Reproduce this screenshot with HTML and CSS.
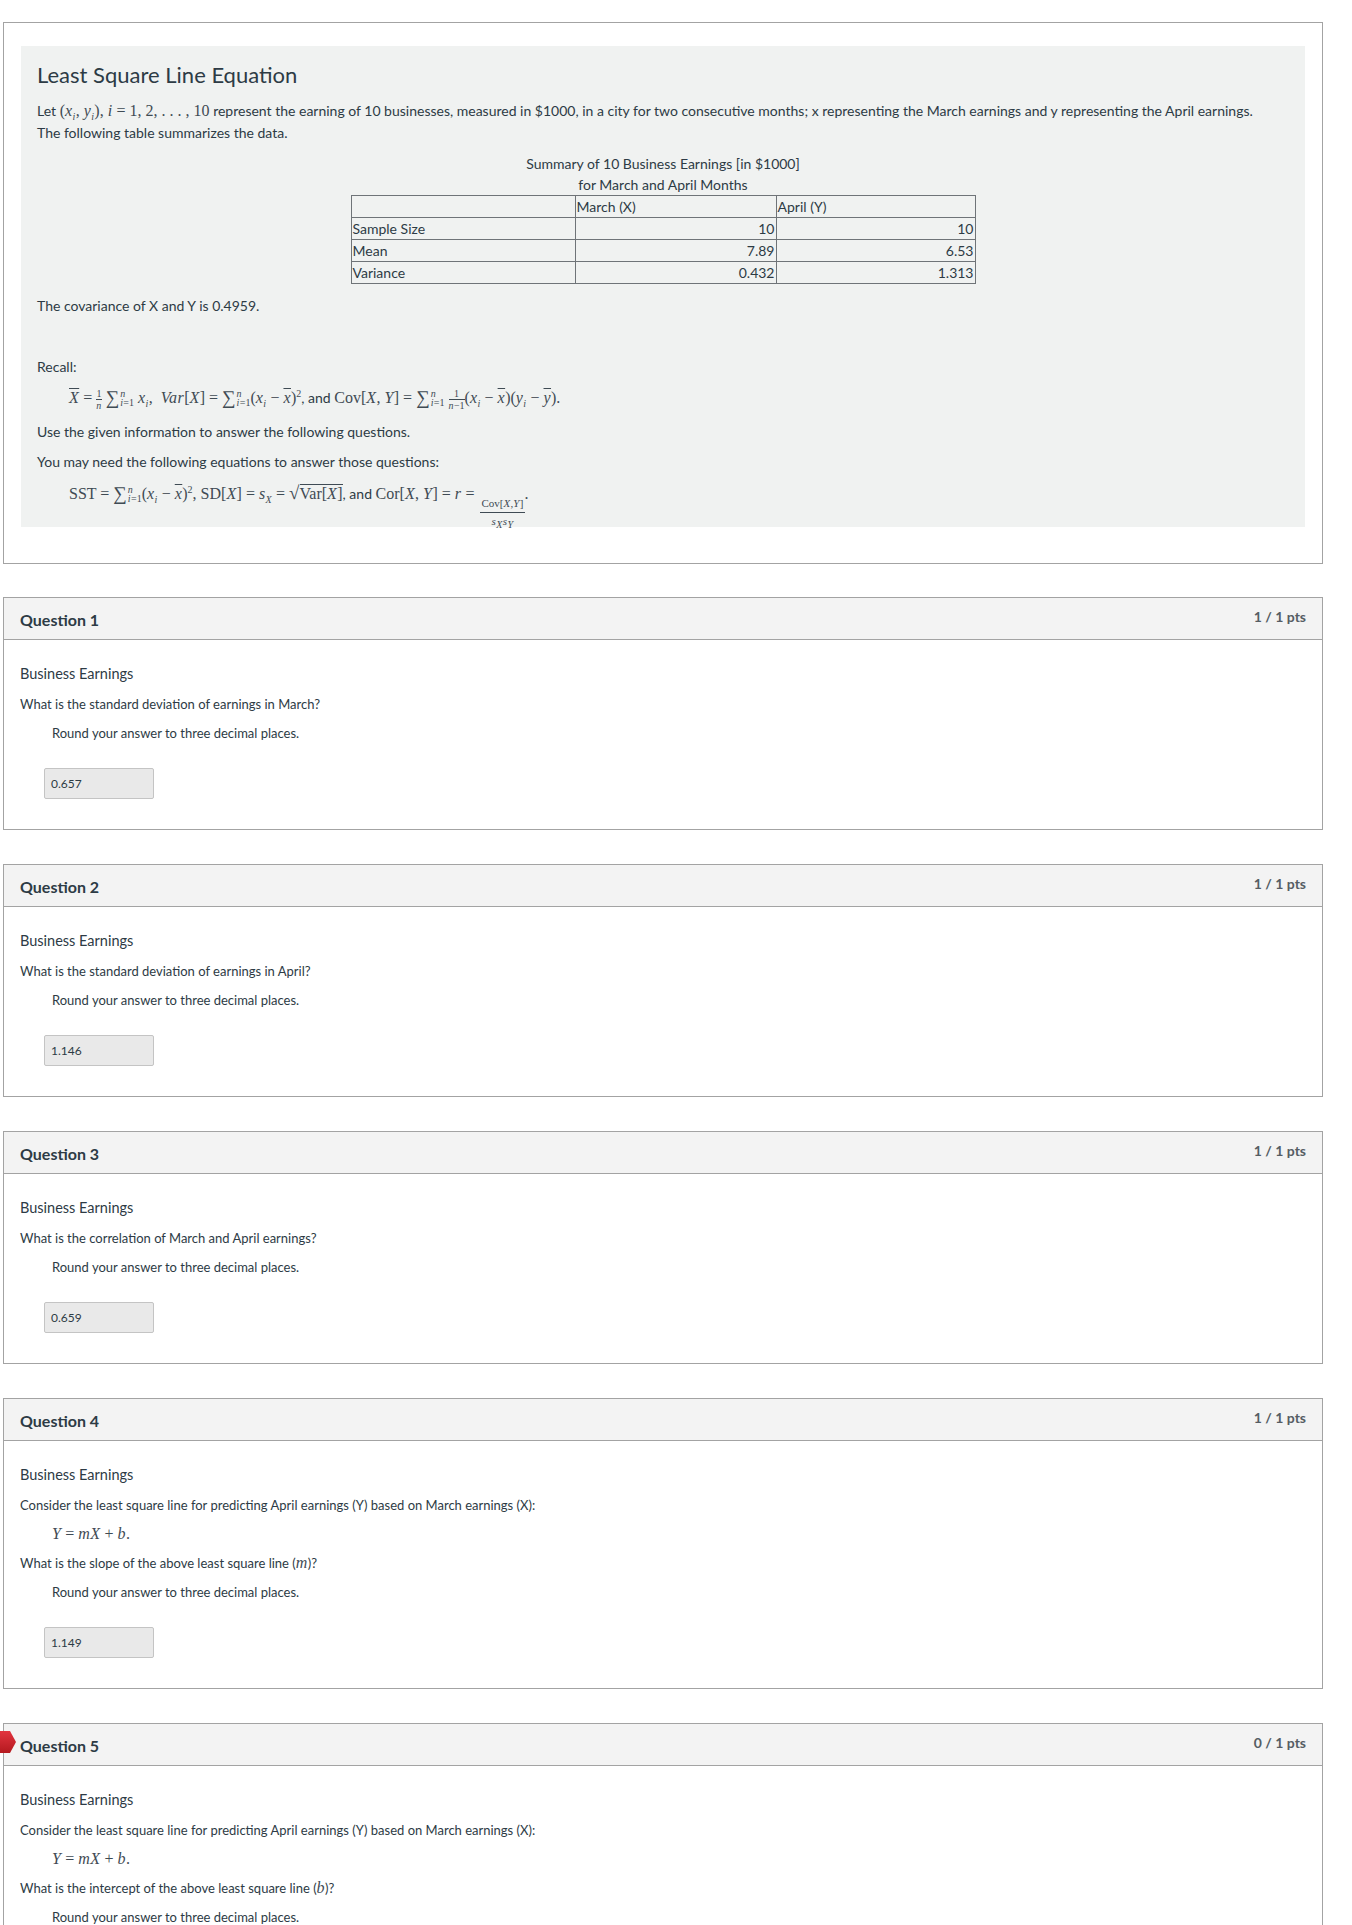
FILE: index.html
```html
<!DOCTYPE html>
<html lang="en">
<head>
    <meta charset="UTF-8">
    <title>Least Square Line Equation</title>
    <link rel="stylesheet" href="styles.css">
</head>
<body>
    <div class="quiz">
        <div class="card intro">
            <div class="panel">
                <h2>Least Square Line Equation</h2>
                <p class="lead">Let <span class="math">(<i>x<sub>i</sub></i>, <i>y<sub>i</sub></i>), <i>i</i> = 1, 2, . . . , 10</span> represent the earning of 10 businesses, measured in $1000, in a city for two consecutive months; x representing the March earnings and y representing the April earnings.<br>The following table summarizes the data.</p>
                <p class="caption">Summary of 10 Business Earnings [in $1000]<br>for March and April Months</p>
                <table class="summary">
                    <tr><td></td><td>March (X)</td><td>April (Y)</td></tr>
                    <tr><td>Sample Size</td><td class="num">10</td><td class="num">10</td></tr>
                    <tr><td>Mean</td><td class="num">7.89</td><td class="num">6.53</td></tr>
                    <tr><td>Variance</td><td class="num">0.432</td><td class="num">1.313</td></tr>
                </table>
                <p class="covariance">The covariance of X and Y is 0.4959.</p>
                <p class="recall">Recall:</p>
                <p class="formula">
                    <span class="math"><i class="bar">X</i> = <span class="frac small"><span>1</span><span><i>n</i></span></span> <span class="sum">∑<span class="limits"><i>n</i><span><i>i</i>=1</span></span></span> <i>x<sub>i</sub></i>, &nbsp;<i>Var</i>[<i>X</i>] = <span class="sum">∑<span class="limits"><i>n</i><span><i>i</i>=1</span></span></span>(<i>x<sub>i</sub></i> − <i class="bar">x</i>)<sup>2</sup></span>, and <span class="math">Cov[<i>X</i>, <i>Y</i>] = <span class="sum">∑<span class="limits"><i>n</i><span><i>i</i>=1</span></span></span> <span class="frac small"><span>1</span><span><i>n</i>−1</span></span>(<i>x<sub>i</sub></i> − <i class="bar">x</i>)(<i>y<sub>i</sub></i> − <i class="bar">y</i>).</span>
                </p>
                <p class="use">Use the given information to answer the following questions.</p>
                <p class="need">You may need the following equations to answer those questions:</p>
                <p class="formula">
                    <span class="math">SST = <span class="sum">∑<span class="limits"><i>n</i><span><i>i</i>=1</span></span></span>(<i>x<sub>i</sub></i> − <i class="bar">x</i>)<sup>2</sup>, SD[<i>X</i>] = <i>s<sub>X</sub></i> = <span class="root">√<span class="radicand">Var[<i>X</i>]</span></span></span>, and <span class="math">Cor[<i>X</i>, <i>Y</i>] = <i>r</i> = <span class="frac wide"><span>Cov[<i>X</i>,<i>Y</i>]</span><span><i>s<sub>X</sub>s<sub>Y</sub></i></span></span>.</span>
                </p>
            </div>
        </div>

        <div class="card question">
            <div class="question-header"><span class="question-name">Question 1</span><span class="pts">1 / 1 pts</span></div>
            <div class="question-body">
                <p class="group-name">Business Earnings</p>
                <p>What is the standard deviation of earnings in March?</p>
                <p class="indent">Round your answer to three decimal places.</p>
                <div class="answer">0.657</div>
            </div>
        </div>

        <div class="card question">
            <div class="question-header"><span class="question-name">Question 2</span><span class="pts">1 / 1 pts</span></div>
            <div class="question-body">
                <p class="group-name">Business Earnings</p>
                <p>What is the standard deviation of earnings in April?</p>
                <p class="indent">Round your answer to three decimal places.</p>
                <div class="answer">1.146</div>
            </div>
        </div>

        <div class="card question">
            <div class="question-header"><span class="question-name">Question 3</span><span class="pts">1 / 1 pts</span></div>
            <div class="question-body">
                <p class="group-name">Business Earnings</p>
                <p>What is the correlation of March and April earnings?</p>
                <p class="indent">Round your answer to three decimal places.</p>
                <div class="answer">0.659</div>
            </div>
        </div>

        <div class="card question">
            <div class="question-header"><span class="question-name">Question 4</span><span class="pts">1 / 1 pts</span></div>
            <div class="question-body">
                <p class="group-name">Business Earnings</p>
                <p>Consider the least square line for predicting April earnings (Y) based on March earnings (X):</p>
                <p class="indent"><span class="math"><i>Y</i> = <i>mX</i> + <i>b</i>.</span></p>
                <p>What is the slope of the above least square line (<span class="math"><i>m</i></span>)?</p>
                <p class="indent">Round your answer to three decimal places.</p>
                <div class="answer">1.149</div>
            </div>
        </div>

        <div class="card question">
            <svg class="wrong-marker" width="16" height="22" viewBox="0 0 16 22">
                <defs>
                    <linearGradient id="wrongFill" x1="0" y1="0" x2="0" y2="1">
                        <stop offset="0" stop-color="#e2343f"/>
                        <stop offset="1" stop-color="#b4191f"/>
                    </linearGradient>
                </defs>
                <polygon points="0,0 10,0 16,11 10,22 0,22" fill="url(#wrongFill)"/>
            </svg>
            <div class="question-header"><span class="question-name">Question 5</span><span class="pts">0 / 1 pts</span></div>
            <div class="question-body">
                <p class="group-name">Business Earnings</p>
                <p>Consider the least square line for predicting April earnings (Y) based on March earnings (X):</p>
                <p class="indent"><span class="math"><i>Y</i> = <i>mX</i> + <i>b</i>.</span></p>
                <p>What is the intercept of the above least square line (<span class="math"><i>b</i></span>)?</p>
                <p class="indent">Round your answer to three decimal places.</p>
                <div class="answer">-2.535</div>
            </div>
        </div>
    </div>
</body>
</html>
```

FILE: styles.css
```css
* {
    box-sizing: border-box;
    margin: 0;
    padding: 0;
}

html, body {
    height: 1925px;
    overflow: hidden;
}

body {
    background-color: white;
    color: #2d3b45;
    font-family: Lato, 'Open Sans', sans-serif;
    font-size: 14px;
    line-height: 22px;
}

.quiz {
    width: 1320px;
    margin: 22px 0 0 3px;
}

.card {
    position: relative;
    border: 1px solid #a3a3a3;
    margin-bottom: 34px;
}

.intro {
    height: 542px;
    padding: 23px 17px 0 17px;
    margin-bottom: 33px;
}

.panel {
    background-color: #f0f2f1;
    height: 481px;
    padding: 16px 16px 0 16px;
}

.panel h2 {
    font-size: 22px;
    font-weight: 400;
    line-height: 26px;
    margin-bottom: 12px;
}

.caption {
    text-align: center;
    line-height: 21px;
    margin-top: 9px;
}

.summary {
    width: 625px;
    margin: 0 auto;
    border-collapse: collapse;
    table-layout: fixed;
}

.summary td {
    height: 22px;
    line-height: 21px;
    padding: 0 1px;
    border: 1px solid #6f7478;
}

.summary td:first-child {
    width: 224px;
}

.summary td:nth-child(2) {
    width: 201px;
}

.summary .num {
    text-align: right;
}

.covariance {
    margin-top: 11px;
}

.recall {
    margin-top: 39px;
}

.formula {
    margin: 9px 0 0 32px;
    height: 22px;
    white-space: nowrap;
}

.use {
    margin-top: 12px;
}

.need {
    margin-top: 8px;
}

.math {
    font-family: 'Liberation Serif', serif;
    font-size: 16px;
    color: #3f4b54;
}

.math i {
    letter-spacing: 0.4px;
}

.math sub, .math sup {
    font-size: 10px;
    line-height: 0;
}

.bar {
    text-decoration: overline;
}

.sum {
    display: inline-flex;
    align-items: center;
    font-size: 19px;
    vertical-align: -1px;
}

.limits {
    display: inline-flex;
    flex-direction: column;
    font-size: 10px;
    line-height: 9px;
    margin-left: 1px;
}

.frac {
    display: inline-flex;
    flex-direction: column;
    align-items: center;
    vertical-align: middle;
    font-size: 10px;
    line-height: 11px;
}

.frac span:first-child {
    border-bottom: 1px solid #3f4b54;
    align-self: stretch;
    text-align: center;
}

.frac.wide {
    font-size: 11px;
    line-height: 13px;
    vertical-align: -8px;
    margin-left: 2px;
}

.frac.wide span:first-child {
    padding: 0 1px 2px 1px;
}

.frac.wide span:last-child {
    padding-top: 2px;
}

.root {
    font-size: 19px;
}

.radicand {
    font-size: 16px;
    border-top: 1px solid #3f4b54;
}

.question-header {
    display: flex;
    justify-content: space-between;
    height: 42px;
    padding: 0 16px;
    background-color: #f3f3f3;
    border-bottom: 1px solid #a3a3a3;
}

.question-name {
    font-size: 16px;
    font-weight: 700;
    line-height: 44px;
}

.pts {
    font-size: 14px;
    font-weight: 700;
    line-height: 38px;
    color: #555d63;
}

.question-body {
    padding: 23px 16px 30px 16px;
    font-size: 13px;
}

.question-body p {
    margin-bottom: 7px;
}

.question-body .group-name {
    font-size: 14.5px;
    margin-bottom: 8px;
}

.indent {
    padding-left: 32px;
}

.answer {
    width: 110px;
    height: 31px;
    margin: 24px 0 0 24px;
    padding-left: 6px;
    background-color: #e9e9e9;
    border: 1px solid #c4c4c4;
    border-radius: 2px;
    font-size: 12px;
    line-height: 29px;
}

.wrong-marker {
    position: absolute;
    left: -4px;
    top: 7px;
}
```
